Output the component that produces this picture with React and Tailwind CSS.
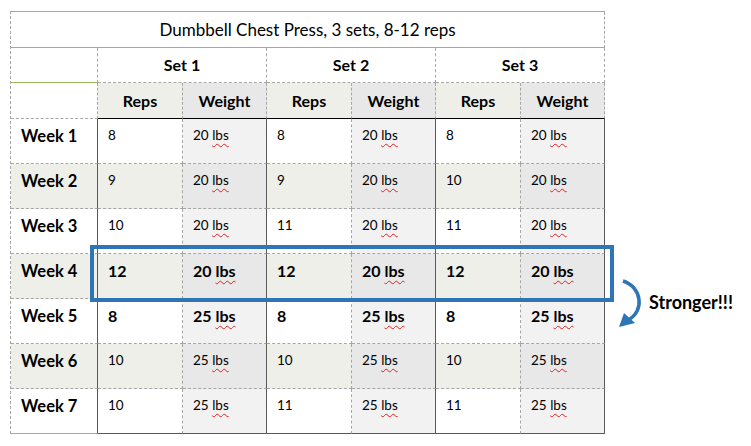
import React from "react";

const rows = [
  { w: "Week 1", d: ["8", "20", "8", "20", "8", "20"], bold: false, alt: false },
  { w: "Week 2", d: ["9", "20", "9", "20", "10", "20"], bold: false, alt: true },
  { w: "Week 3", d: ["10", "20", "11", "20", "11", "20"], bold: false, alt: false },
  { w: "Week 4", d: ["12", "20", "12", "20", "12", "20"], bold: true, alt: true },
  { w: "Week 5", d: ["8", "25", "8", "25", "8", "25"], bold: true, alt: false },
  { w: "Week 6", d: ["10", "25", "10", "25", "10", "25"], bold: false, alt: true },
  { w: "Week 7", d: ["10", "25", "11", "25", "11", "25"], bold: false, alt: false },
];

function Lbs({ n }) {
  return (
    <span>
      {n}{" "}
      <span className="underline decoration-wavy decoration-[#e02020] decoration-1 underline-offset-[3px]">lbs</span>
    </span>
  );
}

const headDash = "border-r border-b border-[#a6a6a6] border-dashed";

export default function App() {
  return (
    <div className="relative w-[751px] h-[446px] bg-white text-black font-['Lato','Open_Sans',sans-serif]">
      <div className="pt-[11px] pl-[10px]">
        <div className="grid w-[595px] grid-cols-[87px_85px_84px_85px_84px_85px_84px] grid-rows-[36px_35px_36px_repeat(7,45px)] border-t border-t-[#9bbb59] border-l border-l-[#a6a6a6] [border-left-style:dashed]">
          {/* title */}
          <div className="col-span-7 flex items-center justify-center text-[17px] border-r border-r-[#a6a6a6] [border-right-style:dashed] border-b border-b-[#9bbb59]">
            Dumbbell Chest Press, 3 sets, 8-12 reps
          </div>

          {/* set row */}
          <div className="border-r border-r-[#a6a6a6] [border-right-style:dashed] border-b border-b-[#9bbb59]" />
          {["Set 1", "Set 2", "Set 3"].map((s) => (
            <div key={s} className={`col-span-2 flex items-center justify-center text-[16px] font-bold ${headDash}`}>
              {s}
            </div>
          ))}

          {/* sub header */}
          <div className={headDash} />
          {[0, 1, 2].map((i) => (
            <React.Fragment key={i}>
              <div className="flex items-center justify-center bg-[#eeefe8] text-[16px] font-bold border-r border-r-[#a6a6a6] [border-right-style:dashed] border-b border-b-black">
                Reps
              </div>
              <div className="flex items-center justify-center bg-[#e8e8e8] text-[16px] font-bold border-r border-r-[#a6a6a6] [border-right-style:dashed] border-b border-b-black">
                Weight
              </div>
            </React.Fragment>
          ))}

          {/* body */}
          {rows.map((r, ri) => {
            const last = ri === rows.length - 1;
            const bottom = last
              ? "border-b border-b-[#595959]"
              : "border-b border-b-[#a6a6a6] [border-bottom-style:dashed]";
            const labelBottom = last
              ? "border-b border-b-[#9bbb59]"
              : "border-b border-b-[#a6a6a6] [border-bottom-style:dashed]";
            const txt = r.bold ? "pt-[5px] text-[16px] font-bold" : "pt-[6px] text-[13.5px]";
            return (
              <React.Fragment key={r.w}>
                <div
                  className={`pl-[10px] pt-[5px] text-[16.5px] font-bold border-r border-r-[#595959] ${labelBottom} ${
                    r.alt ? "bg-[#eeefe8]" : "bg-white"
                  }`}
                >
                  {r.w}
                </div>
                {r.d.map((v, ci) => {
                  const isW = ci % 2 === 1;
                  const bg = isW
                    ? r.alt
                      ? "bg-[#e8e8e8]"
                      : "bg-[#f2f2f2]"
                    : r.alt
                    ? "bg-[#eeefe8]"
                    : "bg-white";
                  const right = isW
                    ? "border-r border-r-[#595959]"
                    : "border-r border-r-[#a6a6a6] [border-right-style:dashed]";
                  return (
                    <div key={ci} className={`pl-[10px] ${txt} ${bg} ${right} ${bottom}`}>
                      {isW ? <Lbs n={v} /> : v}
                    </div>
                  );
                })}
              </React.Fragment>
            );
          })}
        </div>
      </div>

      {/* highlight box over week 4 */}
      <div className="absolute left-[90px] top-[245px] h-[57px] w-[524px] border-4 border-[#2e75b6]" />

      {/* curved arrow */}
      <svg className="absolute left-[612px] top-[276px]" width="36" height="56" viewBox="612 276 36 56">
        <path d="M623 281 C 642 287, 645 311, 628 320" fill="none" stroke="#2e75b6" strokeWidth="3.5" />
        <polygon points="619,327 624,313 635,323" fill="#2e75b6" />
      </svg>

      <div className="absolute left-[649px] top-[291px] text-[18px] font-bold leading-[22px]">Stronger!!!</div>
    </div>
  );
}
